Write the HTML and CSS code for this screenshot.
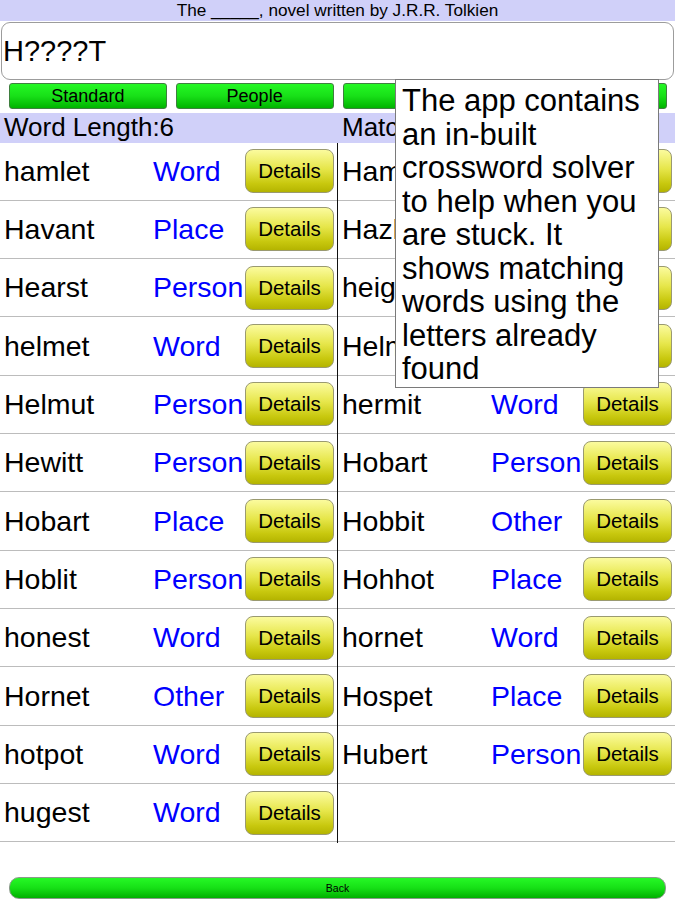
FILE: index.html
```html
<!DOCTYPE html>
<html lang="en">
<head>
<meta charset="utf-8">
<title>Crossword Solver</title>
<link rel="stylesheet" href="styles.css">
</head>
<body>
<div class="app">
  <div class="title">The _____, novel written by J.R.R. Tolkien</div>
  <div class="entry">H????T</div>
  <div class="modes">
    <div class="mode">Standard</div>
    <div class="mode">People</div>
    <div class="mode">Places</div>
    <div class="mode">Other</div>
  </div>
  <div class="info">
    <div class="info-cell">Word Length:6</div>
    <div class="info-cell">Matches:23</div>
  </div>
  <div class="results">
    <div class="col col-left">
      <div class="row"><span class="word">hamlet</span><span class="type">Word</span><span class="details">Details</span></div>
      <div class="row"><span class="word">Havant</span><span class="type">Place</span><span class="details">Details</span></div>
      <div class="row"><span class="word">Hearst</span><span class="type">Person</span><span class="details">Details</span></div>
      <div class="row"><span class="word">helmet</span><span class="type">Word</span><span class="details">Details</span></div>
      <div class="row"><span class="word">Helmut</span><span class="type">Person</span><span class="details">Details</span></div>
      <div class="row"><span class="word">Hewitt</span><span class="type">Person</span><span class="details">Details</span></div>
      <div class="row"><span class="word">Hobart</span><span class="type">Place</span><span class="details">Details</span></div>
      <div class="row"><span class="word">Hoblit</span><span class="type">Person</span><span class="details">Details</span></div>
      <div class="row"><span class="word">honest</span><span class="type">Word</span><span class="details">Details</span></div>
      <div class="row"><span class="word">Hornet</span><span class="type">Other</span><span class="details">Details</span></div>
      <div class="row"><span class="word">hotpot</span><span class="type">Word</span><span class="details">Details</span></div>
      <div class="row"><span class="word">hugest</span><span class="type">Word</span><span class="details">Details</span></div>
    </div>
    <div class="col">
      <div class="row"><span class="word">Hamlet</span><span class="type">Other</span><span class="details">Details</span></div>
      <div class="row"><span class="word">Hazlitt</span><span class="type">Person</span><span class="details">Details</span></div>
      <div class="row"><span class="word">height</span><span class="type">Word</span><span class="details">Details</span></div>
      <div class="row"><span class="word">Helmut</span><span class="type">Person</span><span class="details">Details</span></div>
      <div class="row"><span class="word">hermit</span><span class="type">Word</span><span class="details">Details</span></div>
      <div class="row"><span class="word">Hobart</span><span class="type">Person</span><span class="details">Details</span></div>
      <div class="row"><span class="word">Hobbit</span><span class="type">Other</span><span class="details">Details</span></div>
      <div class="row"><span class="word">Hohhot</span><span class="type">Place</span><span class="details">Details</span></div>
      <div class="row"><span class="word">hornet</span><span class="type">Word</span><span class="details">Details</span></div>
      <div class="row"><span class="word">Hospet</span><span class="type">Place</span><span class="details">Details</span></div>
      <div class="row"><span class="word">Hubert</span><span class="type">Person</span><span class="details">Details</span></div>
      <div class="row"></div>
    </div>
  </div>
  <div class="footer"><div class="back">Back</div></div>
  <div class="tip">The app contains an in-built crossword solver to help when you are stuck. It shows matching words using the letters already found</div>
</div>
</body>
</html>
```

FILE: styles.css
```css
html, body {
  margin: 0;
  padding: 0;
  background: #ffffff;
}

body {
  font-family: "Liberation Sans", Arial, sans-serif;
  color: #000000;
}

.app {
  position: relative;
  width: 675px;
  height: 900px;
  overflow: hidden;
  display: flex;
  flex-direction: column;
}

.title {
  height: 21px;
  background: #d0d0f9;
  font-size: 17.2px;
  line-height: 21px;
  text-align: center;
  white-space: nowrap;
}

.entry {
  margin: 1px 1px 0 1px;
  height: 58px;
  box-sizing: border-box;
  border: 1px solid #9c9c9c;
  border-radius: 9px;
  padding-left: 1px;
  display: flex;
  align-items: center;
  font-size: 29px;
  padding-top: 1px;
}

.modes {
  margin-top: 3px;
  height: 26px;
  padding: 0 8px 0 9px;
  display: flex;
  gap: 9px;
}

.mode {
  flex: 1 1 0;
  box-sizing: border-box;
  border: 1px solid #3f7f3f;
  border-radius: 3px;
  background: linear-gradient(#24f824 0%, #18e018 50%, #00b400 100%);
  font-size: 18px;
  display: flex;
  align-items: center;
  justify-content: center;
  padding-top: 1px;
}

.info {
  margin-top: 4px;
  height: 29.5px;
  background: #d0d0f9;
  display: flex;
}

.info-cell {
  flex: 0 0 338px;
  box-sizing: border-box;
  padding-left: 4px;
  font-size: 26px;
  line-height: 29px;
  white-space: nowrap;
}

.results {
  height: 700px;
  display: flex;
}

.col {
  flex: 0 0 337px;
  display: grid;
  grid-template-rows: repeat(12, 1fr);
}

.col-left {
  flex: 0 0 338px;
  box-sizing: border-box;
  border-right: 1px solid #111111;
}

.row {
  box-sizing: border-box;
  border-bottom: 1px solid #bcbcbc;
  display: flex;
  align-items: center;
  padding-left: 4px;
  min-height: 0;
}

.word {
  flex: 0 0 149px;
  font-size: 28.5px;
  white-space: nowrap;
}

.type {
  flex: 0 0 92px;
  font-size: 28.5px;
  color: #0000ff;
  white-space: nowrap;
}

.details {
  flex: 0 0 89px;
  height: 44px;
  box-sizing: border-box;
  border: 1px solid #9a9a70;
  border-radius: 8px;
  background: linear-gradient(#fbfb9e 0%, #e6e64a 45%, #c8c80e 80%, #b4b400 100%);
  font-size: 20.5px;
  display: flex;
  align-items: center;
  justify-content: center;
}

.footer {
  margin-top: 34px;
  padding: 0 9px;
}

.back {
  height: 22px;
  box-sizing: border-box;
  border: 1px solid #8a9a8a;
  border-radius: 10px;
  background: linear-gradient(#26f826 0%, #16e016 50%, #00b000 100%);
  font-size: 10.5px;
  display: flex;
  align-items: center;
  justify-content: center;
}

.tip {
  position: absolute;
  left: 395px;
  top: 79px;
  width: 247px;
  padding: 4px 9px 1px 6px;
  background: #ffffff;
  border: 1px solid #7a7a7a;
  font-size: 31px;
  line-height: 33.5px;
}
```
